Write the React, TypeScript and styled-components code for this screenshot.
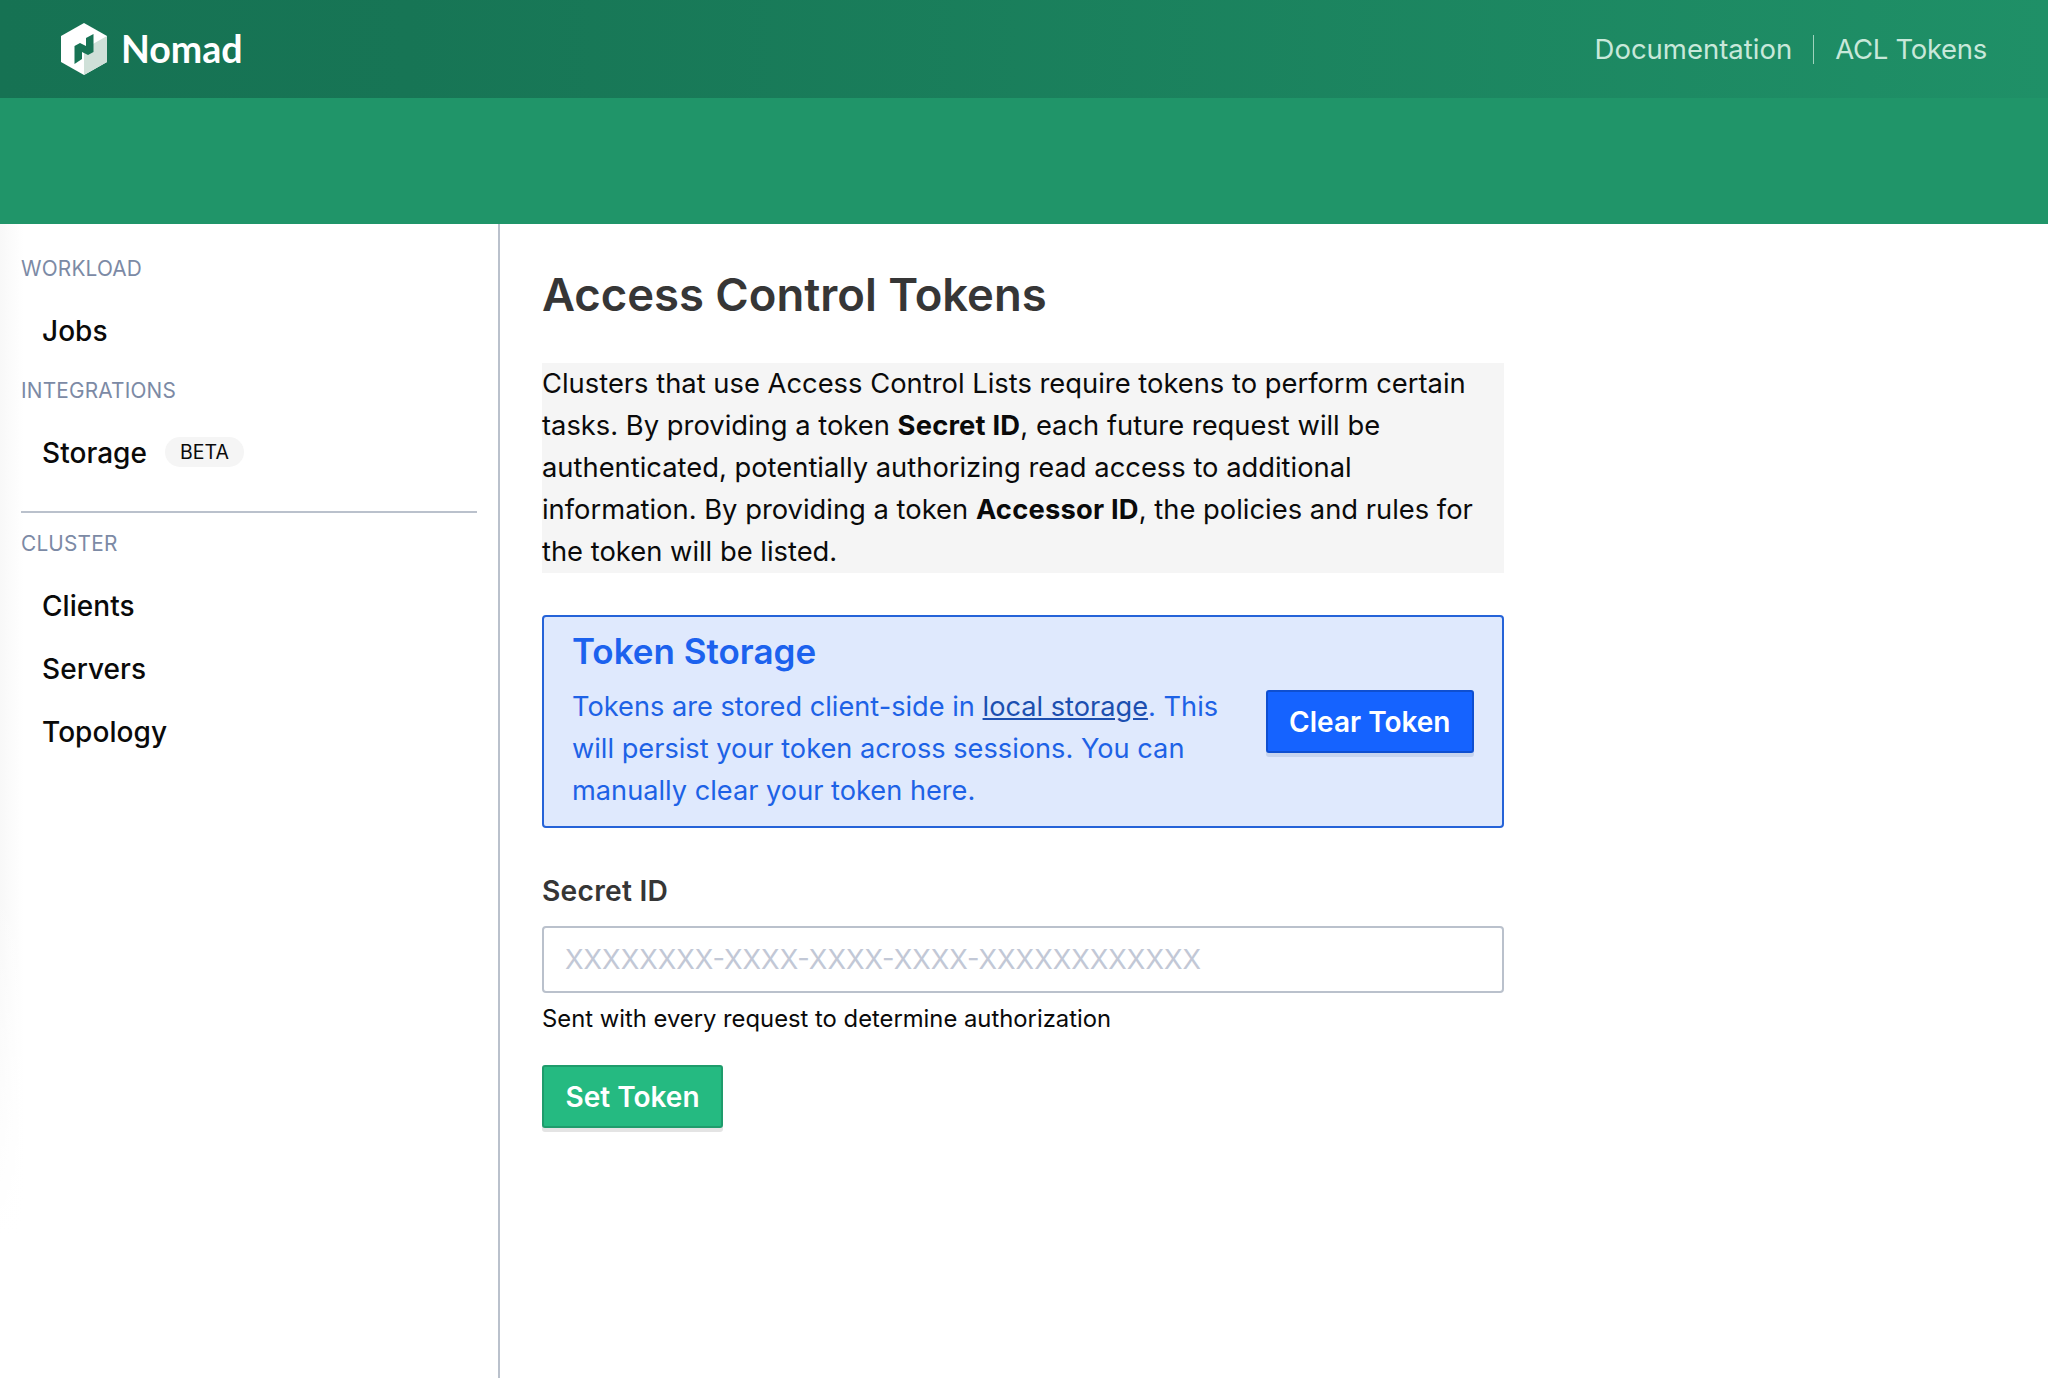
import React from "react";
import styled, { createGlobalStyle } from "styled-components";

const Global = createGlobalStyle`
  html, body { margin: 0; padding: 0; background: #fff; }
  body { font-family: Inter, "Liberation Sans", sans-serif; color: #0a0a0a; font-size: 27.35px; line-height: 42px; }
  * { box-sizing: border-box; }
`;

const Page = styled.div`
  width: 2048px;
  min-height: 1378px;
  display: flex;
  flex-direction: column;
  overflow: hidden;
`;

const TopBar = styled.header`
  height: 98px;
  flex: none;
  display: flex;
  align-items: center;
  justify-content: space-between;
  padding: 0 61px 0 61px;
  background: linear-gradient(to right, #167253 0%, #177555 20%, #1f9067 100%);
`;

const Brand = styled.a`
  display: flex;
  align-items: center;
  gap: 14px;
  color: #fff;
  font-family: Lato, sans-serif;
  font-weight: 700;
  font-size: 37.5px;
  line-height: 52px;
`;

const TopNav = styled.nav`
  display: flex;
  align-items: center;
  margin-top: 1px;
  color: #c8e8da;
  font-size: 27.5px;
  line-height: 29px;
`;

const TopLink = styled.a`
  & + & {
    margin-left: 21px;
    padding-left: 21px;
    border-left: 1.5px solid #9fd3bd;
    letter-spacing: -0.3px;
  }
`;

const SubNav = styled.div`
  height: 126px;
  flex: none;
  background: #209569;
`;

const Main = styled.div`
  flex: 1;
  display: flex;
`;

const Sidebar = styled.aside`
  width: 500px;
  flex: none;
  border-right: 2px solid #bac1cc;
  padding: 27px 21px 0;
  background:
    linear-gradient(to bottom, rgba(255, 255, 255, 0) 65%, #fff 100%),
    linear-gradient(to right, #f8f8f8, #fff 24px);
  background-repeat: no-repeat;
  background-size: 100% 1010px;
`;

const MenuLabel = styled.p`
  margin: 0;
  font-size: 20.8px;
  line-height: 36px;
  color: #7c8aa5;
  letter-spacing: 0.2px;
  text-transform: uppercase;
`;

const MenuList = styled.ul`
  list-style: none;
  margin: 0;
  padding: 12px 0 11px;
`;

const MenuItem = styled.li`
  display: flex;
  align-items: center;
  height: 63px;
  padding-left: 21px;
  font-weight: 550;
  font-size: 28px;
  letter-spacing: 0.05px;
  color: #0a0a0a;
`;

const Badge = styled.span`
  display: inline-flex;
  align-items: center;
  height: 30px;
  margin: 0 0 2px 18px;
  padding: 0 15px;
  border-radius: 15px;
  background: #f5f5f5;
  font-size: 19.5px;
  font-weight: 400;
  line-height: 30px;
`;

const Divider = styled.hr`
  margin: 16px 0 13px;
  border: 0;
  border-top: 2px solid #bac1cc;
`;

const Content = styled.main`
  width: 1004px;
  padding: 42px 0 0 42px;
  display: flex;
  flex-direction: column;
  align-items: stretch;
`;

const Title = styled.h1`
  margin: 0 0 39px;
  font-size: 45.4px;
  line-height: 58px;
  font-weight: 600;
  color: #363636;
`;

const Intro = styled.p`
  margin: 0 0 42px;
  background: #f5f5f5;
  strong { font-weight: 700; letter-spacing: 0.2px; }
`;

const Notice = styled.section`
  height: 213px;
  display: flex;
  align-items: center;
  gap: 30px;
  padding: 0 28px;
  border: 2px solid #2563d8;
  border-radius: 4px;
  background: #dfe9fd;
  color: #1d62e6;
`;

const NoticeBody = styled.div`
  flex: 1;
  padding-bottom: 4px;
`;

const NoticeTitle = styled.h3`
  margin: 0 0 12px;
  font-size: 35px;
  line-height: 46px;
  font-weight: 600;
  color: #1c62ee;
`;

const NoticeText = styled.p`
  margin: 0;
  font-size: 27.2px;
  a { color: #1c4fb0; text-decoration: underline; }
`;

const Button = styled.button<{ $kind: "blue" | "green" }>`
  flex: none;
  height: 63px;
  padding: 0 21.5px;
  font: 600 28px/42px Inter, sans-serif;
  color: #fff;
  border-radius: 3px;
  border: 2px solid ${(p) => (p.$kind === "blue" ? "#0f4fd0" : "#1f9c6c")};
  background: ${(p) => (p.$kind === "blue" ? "#1563ff" : "#25ba81")};
  box-shadow: 0 4px 0 ${(p) => (p.$kind === "blue" ? "#c6d4ee" : "#e4e4e4")};
`;

const Field = styled.div`
  margin-top: 42px;
`;

const FieldLabel = styled.label`
  display: block;
  font-weight: 600;
  font-size: 28.2px;
  letter-spacing: 0.25px;
  color: #363636;
  margin-bottom: 14px;
`;

const TextInput = styled.input`
  display: block;
  width: 100%;
  height: 67px;
  padding: 0 21px;
  border: 2px solid #bac1cc;
  border-radius: 4px;
  font: 400 27.2px/42px Inter, sans-serif;
  outline: none;
  background: #fff;
  &::placeholder { color: #c2c8d6; opacity: 1; }
`;

const Help = styled.p`
  margin: 10px 0 0;
  font-size: 23.8px;
  line-height: 32px;
`;

const Actions = styled.div`
  margin-top: 30px;
`;

const Logo = () => (
  <svg width="46" height="52" viewBox="0 0 46 52" aria-hidden="true">
    <polygon points="23,0 46,13 46,39 23,52 0,39 0,13" fill="#fff" />
    <polygon points="46,13 46,39 23,52 23,26" fill="#cfe0d8" />
    <polygon points="32.5,11 32.5,29 27,32 21,29 21,36 13.5,41 13.5,23 19,20 25,23 25,15" fill="#177354" />
  </svg>
);

export default function App() {
  return (
    <Page>
      <Global />
      <TopBar>
        <Brand><Logo />Nomad</Brand>
        <TopNav>
          <TopLink>Documentation</TopLink>
          <TopLink>ACL Tokens</TopLink>
        </TopNav>
      </TopBar>
      <SubNav />
      <Main>
        <Sidebar>
          <MenuLabel>Workload</MenuLabel>
          <MenuList><MenuItem>Jobs</MenuItem></MenuList>
          <MenuLabel>Integrations</MenuLabel>
          <MenuList><MenuItem>Storage<Badge>BETA</Badge></MenuItem></MenuList>
          <Divider />
          <MenuLabel>Cluster</MenuLabel>
          <MenuList>
            <MenuItem>Clients</MenuItem>
            <MenuItem>Servers</MenuItem>
            <MenuItem>Topology</MenuItem>
          </MenuList>
        </Sidebar>
        <Content>
          <Title>Access Control Tokens</Title>
          <Intro>
            Clusters that use Access Control Lists require tokens to perform certain tasks. By providing a token <strong>Secret ID</strong>, each future request will be authenticated, potentially authorizing read access to additional information. By providing a token <strong>Accessor ID</strong>, the policies and rules for the token will be listed.
          </Intro>
          <Notice>
            <NoticeBody>
              <NoticeTitle>Token Storage</NoticeTitle>
              <NoticeText>
                Tokens are stored client-side in <a>local storage</a>. This will persist your token across sessions. You can manually clear your token here.
              </NoticeText>
            </NoticeBody>
            <Button $kind="blue">Clear Token</Button>
          </Notice>
          <Field>
            <FieldLabel>Secret ID</FieldLabel>
            <TextInput placeholder="XXXXXXXX-XXXX-XXXX-XXXX-XXXXXXXXXXXX" />
            <Help>Sent with every request to determine authorization</Help>
          </Field>
          <Actions><Button $kind="green">Set Token</Button></Actions>
        </Content>
      </Main>
    </Page>
  );
}
